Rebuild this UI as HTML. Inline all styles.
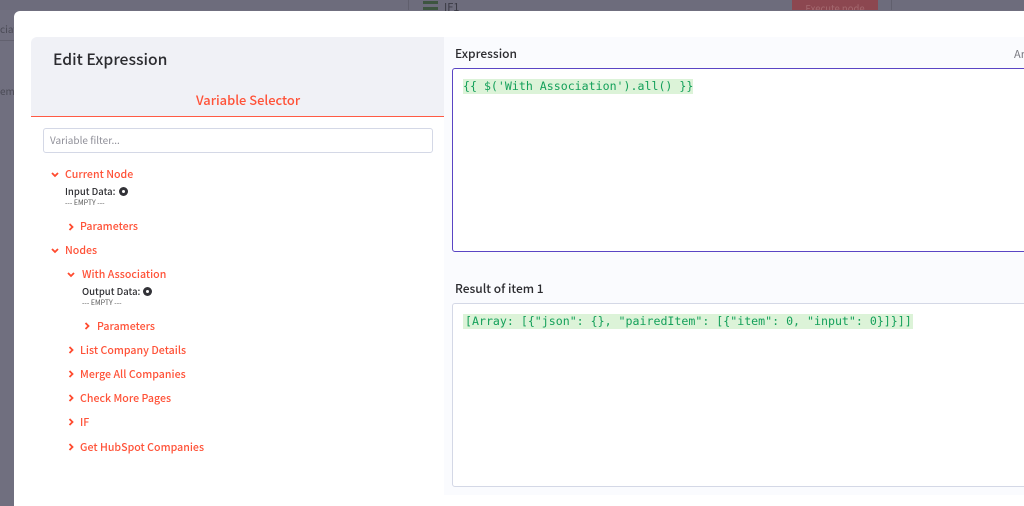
<!DOCTYPE html>
<html><head><meta charset="utf-8">
<style>
html,body{margin:0;padding:0;width:1024px;height:506px;overflow:hidden;background:#706f7f}
body{position:relative;font-family:"Noto Sans CJK JP","Liberation Sans",sans-serif}
.a{position:absolute;white-space:nowrap;line-height:1}
.r{color:#ff5238;font-size:10.6px;font-weight:500;line-height:14px;letter-spacing:.02px}
.d{color:#2f2f33;font-size:9.5px;line-height:12px;font-weight:500}
.e{color:#555;font-size:7px;line-height:8px}
.m{font-family:"DejaVu Sans Mono","Liberation Mono",monospace;font-size:11.6px;line-height:15px;color:#14a05a;background:#dcf3d8;height:15px;padding:0}
svg{position:absolute;overflow:visible}
svg path{fill:none;stroke:#ff4a2e;stroke-width:1.8}
.dot{position:absolute;width:9px;height:9px;border-radius:50%;background:#333338}
.dot:after{content:"";position:absolute;left:3px;top:3px;width:3px;height:3px;border-radius:50%;background:#fff}
</style></head><body>
<div class="a" style="left:0;top:0;width:1024px;height:10px;background:#6d6c7c"></div>
<div class="a" style="left:0;top:40px;width:14px;height:1px;background:#62616f"></div>
<div class="a" style="left:0;top:24px;font-size:10px;color:#4a4a55">ciat</div>
<div class="a" style="left:0;top:86px;font-size:10px;color:#4a4a55">em</div>
<div class="a" style="left:408px;top:0;width:1px;height:10px;background:#605f6d"></div>
<div class="a" style="left:423px;top:1px;width:15px;height:3px;background:#3d5540"></div>
<div class="a" style="left:423px;top:7px;width:15px;height:3px;background:#3d5540"></div>
<div class="a" style="left:444px;top:2px;font-size:11px;color:#3a3a44">IF1</div>
<div class="a" style="left:792px;top:0;width:86px;height:10px;background:#8c4750;color:#a56a70;font-size:9.5px;line-height:17px;text-align:center;overflow:hidden">Execute node</div>
<div class="a" style="left:891px;top:0;width:1px;height:10px;background:#605f6d"></div>

<div class="a" style="left:14px;top:11px;width:1030px;height:510px;background:#fff;border-radius:6px 0 0 0"></div>
<div class="a" style="left:31px;top:37px;width:413px;height:80px;background:#f0f1f6;border-radius:6px 0 0 0"></div>
<div class="a" style="left:31px;top:116px;width:413px;height:1px;background:#ff5a44"></div>
<div class="a" style="left:53px;top:49px;font-size:15.7px;line-height:20px;color:#2c2c30;font-weight:500">Edit Expression</div>
<div class="a" style="left:196px;top:92px;font-size:12.9px;line-height:16px;color:#ff5238;font-weight:500">Variable Selector</div>
<div class="a" style="left:43px;top:128px;width:388px;height:23px;border:1px solid #d4d8e6;border-radius:3px;background:#fff"></div>
<div class="a" style="left:50px;top:133px;font-size:10px;line-height:14px;color:#8f8f98">Variable filter...</div>

<svg style="left:0;top:0" width="1024" height="506">
<path d="M52 173l3 3 3-3"/><path d="M52 249l3 3 3-3"/><path d="M68 273l3 3 3-3"/>
<path d="M69.500 224l3 3-3 3"/><path d="M85.500 323l3 3-3 3"/>
<path d="M69.500 347l3 3-3 3"/><path d="M69.500 371l3 3-3 3"/><path d="M69.500 395l3 3-3 3"/><path d="M69.500 419l3 3-3 3"/><path d="M69.500 444l3 3-3 3"/>
</svg>

<div class="a r" style="left:65px;top:168px">Current Node</div>
<div class="a d" style="left:65px;top:185px">Input Data:</div>
<div class="dot" style="left:119px;top:187px"></div>
<div class="a e" style="left:65px;top:199px">--- EMPTY ---</div>
<div class="a r" style="left:80px;top:220px">Parameters</div>
<div class="a r" style="left:65px;top:244px">Nodes</div>
<div class="a r" style="left:82px;top:268px">With Association</div>
<div class="a d" style="left:82px;top:285px">Output Data:</div>
<div class="dot" style="left:143px;top:287px"></div>
<div class="a e" style="left:82px;top:299px">--- EMPTY ---</div>
<div class="a r" style="left:97px;top:320px">Parameters</div>
<div class="a r" style="left:80px;top:344px">List Company Details</div>
<div class="a r" style="left:80px;top:368px">Merge All Companies</div>
<div class="a r" style="left:80px;top:392px">Check More Pages</div>
<div class="a r" style="left:80px;top:416px">IF</div>
<div class="a r" style="left:80px;top:441px">Get HubSpot Companies</div>

<div class="a" style="left:444px;top:37px;width:580px;height:458px;background:#fafbfe"></div>
<div class="a" style="left:455px;top:46px;font-size:12px;line-height:15px;color:#2c2c30;font-weight:500">Expression</div>
<div class="a" style="left:1014px;top:47px;font-size:11px;line-height:15px;color:#77777f">An</div>
<div class="a" style="left:452px;top:68px;width:600px;height:182px;background:#fff;border:1px solid #5a45c4;border-radius:3px"></div>
<div class="a m" style="left:463px;top:79px;width:230px">{{ $('With Association').all() }}</div>
<div class="a" style="left:455px;top:281px;font-size:12px;line-height:15px;color:#2c2c30;font-weight:500">Result of item 1</div>
<div class="a" style="left:452px;top:303px;width:600px;height:182px;background:#fff;border:1px solid #d4d8e6;border-radius:3px"></div>
<div class="a m" style="left:463px;top:314px;width:448px;padding-left:2px">[Array: [{"json": {}, "pairedItem": [{"item": 0, "input": 0}]}]]</div>
</body></html>
